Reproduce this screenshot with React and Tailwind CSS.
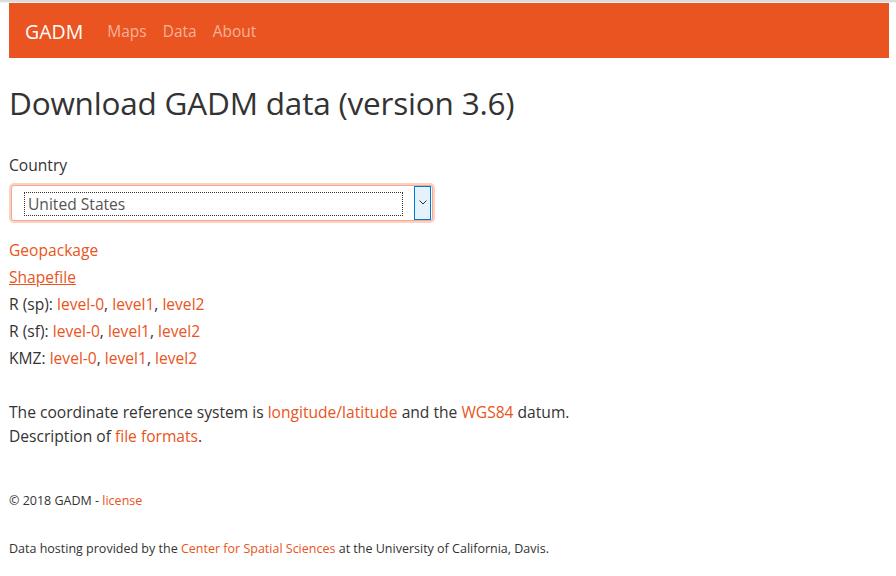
import React from 'react';

const font = { fontFamily: '"Open Sans", "DejaVu Sans", sans-serif' };

const Link = ({ children, className = '' }) => (
    <a href="#" className={`text-[#e95420] no-underline ${className}`}>{children}</a>
);

const Levels = () => (
    <>
        <Link>level-0</Link>, <Link>level1</Link>, <Link>level2</Link>
    </>
);

const App = () => {
    return (
        <div className="min-h-screen bg-white text-[#333]" style={font}>
            <div className="h-[3px] bg-[#dcdcdc] border-b border-[#f2f2f2]" />
            <div className="pl-[9px] pr-[7px]">
                <nav className="h-[55px] bg-[#e95420] flex items-center pl-4 pt-[2px]">
                    <span className="text-white text-[19.5px] mr-[24px]">GADM</span>
                    <div className="flex items-center gap-[16px] text-[15.5px] text-[#f6b29a]">
                        <a href="#">Maps</a>
                        <a href="#">Data</a>
                        <a href="#">About</a>
                    </div>
                </nav>

                <h1 className="text-[31.5px] leading-[1.1] mt-[28px] mb-[31px] text-[#333] tracking-[-0.2px]">
                    Download GADM data (version 3.6)
                </h1>

                <div className="text-[15.6px] leading-[27px]">
                    <label className="block mb-[4px]">Country</label>
                    <div className="w-[426px] h-[40px] rounded-[5px] bg-[#f9d2c4] p-[2px] mb-[14px]">
                        <div className="h-full bg-white border border-[#f3a98e] rounded-[3px] flex items-center pl-[12px] pr-[1px]">
                            <div className="flex-1 h-[24px] mt-[3px] border border-dotted border-[#333] flex items-center pl-[3px] text-[#555] text-[15.6px]">
                                United States
                            </div>
                            <div className="w-[17px] h-full ml-[11px] border border-[#0078d7] bg-[#e5f1fb] flex items-center justify-center">
                                <svg width="8" height="5" viewBox="0 0 8 5">
                                    <path d="M0.5 0.5 L4 4 L7.5 0.5" stroke="#333" fill="none" strokeWidth="1" />
                                </svg>
                            </div>
                        </div>
                    </div>

                    <div><Link>Geopackage</Link></div>
                    <div><Link className="text-[#ac3911] underline">Shapefile</Link></div>
                    <div>R (sp): <Levels /></div>
                    <div>R (sf): <Levels /></div>
                    <div>KMZ: <Levels /></div>

                    <div className="mt-[28px] leading-[24px]">
                        <p>The coordinate reference system is <Link>longitude/latitude</Link> and the <Link>WGS84</Link> datum.</p>
                        <p>Description of <Link>file formats</Link>.</p>
                    </div>

                    <div className="text-[12.5px] mt-[45px] leading-[16px]">
                        <p>© 2018 GADM - <Link>license</Link></p>
                        <p className="mt-[32px]">Data hosting provided by the <Link>Center for Spatial Sciences</Link> at the University of California, Davis.</p>
                    </div>
                </div>
            </div>
        </div>
    );
};

export default App;
